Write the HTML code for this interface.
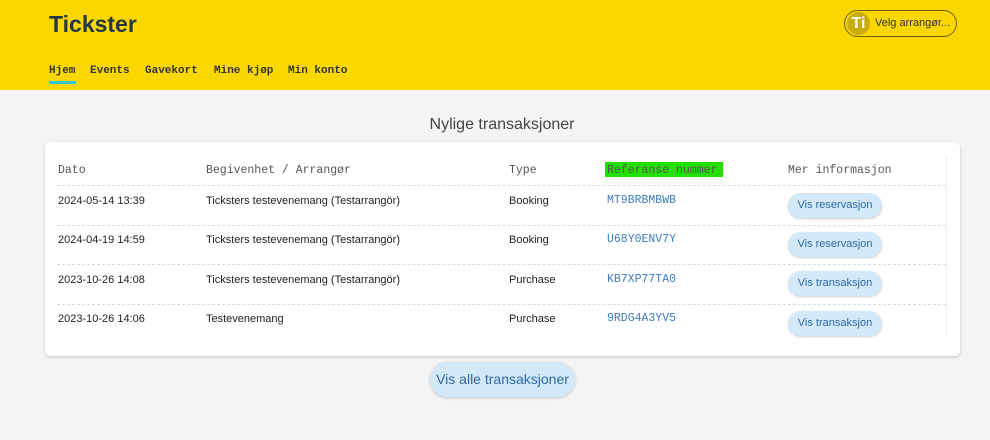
<!DOCTYPE html>
<html><head><meta charset="utf-8"><style>
*{margin:0;padding:0;box-sizing:border-box}
body{width:990px;height:440px;background:#f4f4f4;font-family:"Liberation Sans",sans-serif;position:relative;overflow:hidden}
.hdr{position:absolute;left:0;top:0;width:990px;height:90px;background:#fbd700}
.logo{position:absolute;left:49px;top:11px;font-size:23px;font-weight:bold;color:#253645;letter-spacing:0px}
.nav{position:absolute;top:65px;font-family:"Liberation Mono",monospace;font-size:11px;font-weight:bold;color:#333}
.ul{position:absolute;left:49px;top:81px;width:27px;height:3px;background:#35c3d6}
.org{position:absolute;left:844px;top:10px;width:113px;height:27px;border:1px solid #6b5e10;border-radius:14px}
.org .ti{position:absolute;left:2px;top:1px;width:23px;height:23px;border-radius:50%;background:#c9ac10;color:#fff;font-weight:bold;font-size:16px;text-align:center;line-height:23px}
.org .t{position:absolute;left:30px;top:6px;font-size:11px;color:#333}
h1{position:absolute;left:0;width:1004px;top:116px;text-align:center;font-weight:normal;font-size:16px;color:#444}
.card{position:absolute;left:45px;top:142px;width:915px;height:214px;background:#fff;border-radius:5px;box-shadow:0 1px 3px rgba(0,0,0,.2)}
.vl{position:absolute;left:901px;top:14px;width:1px;height:180px;background:#eee}
.th{position:absolute;top:22px;font-family:"Liberation Mono",monospace;font-size:11.5px;color:#555}
.sep{position:absolute;left:12px;width:889px;border-top:1px dashed #ddd}
.td{position:absolute;font-size:11px;color:#222}
.ref{position:absolute;font-family:"Liberation Mono",monospace;font-size:11.5px;color:#3c7cc0}
.btn{position:absolute;left:743px;width:94px;height:25px;border-radius:13px;background:#d3e9f7;box-shadow:0 1px 2px rgba(0,0,0,.2);color:#2d6aa8;font-size:11px;text-align:center;line-height:25px}
.big{position:absolute;left:430px;top:362px;width:145px;height:35px;border-radius:18px;background:#d3e9f7;box-shadow:0 1px 3px rgba(0,0,0,.2);color:#2d6aa8;font-size:14px;text-align:center;line-height:35px}
</style></head><body>
<div class="hdr">
<div class="logo">Tickster</div>
<div class="nav" style="left:49px">Hjem</div>
<div class="nav" style="left:90px">Events</div>
<div class="nav" style="left:145px">Gavekort</div>
<div class="nav" style="left:214px">Mine kjøp</div>
<div class="nav" style="left:288px">Min konto</div>
<div class="ul"></div>
<div class="org"><div class="ti">Ti</div><div class="t">Velg arrangør...</div></div>
</div>
<h1>Nylige transaksjoner</h1>
<div class="card">
<div class="vl"></div>
<div class="th" style="left:13px">Dato</div>
<div class="th" style="left:161px">Begivenhet / Arrangør</div>
<div class="th" style="left:464px">Type</div>
<div class="th" style="left:560px;top:20px;background:#22e000;padding:2px 2px 0 2px;width:118px;height:15px">Referanse nummer</div>
<div class="th" style="left:743px">Mer informasjon</div>
<div class="sep" style="top:43px"></div>
<div class="sep" style="top:83px"></div>
<div class="sep" style="top:122px"></div>
<div class="sep" style="top:162px"></div>

<div class="td" style="left:13px;top:53px">2024-05-14 13:39</div>
<div class="td" style="left:161px;top:53px">Ticksters testevenemang (Testarrangör)</div>
<div class="td" style="left:464px;top:53px">Booking</div>
<div class="ref" style="left:562px;top:52px">MT9BRBMBWB</div>
<div class="btn" style="top:51px">Vis reservasjon</div>

<div class="td" style="left:13px;top:92px">2024-04-19 14:59</div>
<div class="td" style="left:161px;top:92px">Ticksters testevenemang (Testarrangör)</div>
<div class="td" style="left:464px;top:92px">Booking</div>
<div class="ref" style="left:562px;top:91px">U68Y0ENV7Y</div>
<div class="btn" style="top:90px">Vis reservasjon</div>

<div class="td" style="left:13px;top:132px">2023-10-26 14:08</div>
<div class="td" style="left:161px;top:132px">Ticksters testevenemang (Testarrangör)</div>
<div class="td" style="left:464px;top:132px">Purchase</div>
<div class="ref" style="left:562px;top:131px">KB7XP77TA0</div>
<div class="btn" style="top:129px">Vis transaksjon</div>

<div class="td" style="left:13px;top:171px">2023-10-26 14:06</div>
<div class="td" style="left:161px;top:171px">Testevenemang</div>
<div class="td" style="left:464px;top:171px">Purchase</div>
<div class="ref" style="left:562px;top:170px">9RDG4A3YV5</div>
<div class="btn" style="top:169px">Vis transaksjon</div>
</div>
<div class="big">Vis alle transaksjoner</div>
</body></html>
